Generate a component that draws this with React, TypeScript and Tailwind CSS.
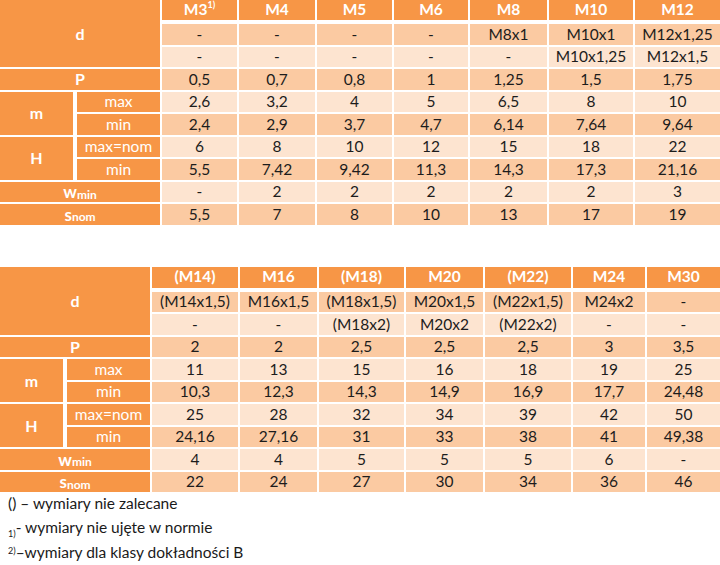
import React from 'react';

type Table = {
  cols: string;
  headerH: string;
  heads: React.ReactNode[];
  rows: string[][];
};

const band = ['bg-[#fbcaa2]', 'bg-[#fde4d0]'];

const first: Table = {
  cols: 'grid-cols-[73px_85px_75px_76px_75px_74px_77px_84px_1fr]',
  headerH: 'grid-rows-[20px_0px_repeat(9,20.5px)]',
  heads: [
    <>
      M3<sup className="text-[9px] -top-[5px]">1)</sup>
    </>,
    'M4',
    'M5',
    'M6',
    'M8',
    'M10',
    'M12',
  ],
  rows: [
    ['-', '-', '-', '-', 'M8x1', 'M10x1', 'M12x1,25'],
    ['-', '-', '-', '-', '-', 'M10x1,25', 'M12x1,5'],
    ['0,5', '0,7', '0,8', '1', '1,25', '1,5', '1,75'],
    ['2,6', '3,2', '4', '5', '6,5', '8', '10'],
    ['2,4', '2,9', '3,7', '4,7', '6,14', '7,64', '9,64'],
    ['6', '8', '10', '12', '15', '18', '22'],
    ['5,5', '7,42', '9,42', '11,3', '14,3', '17,3', '21,16'],
    ['-', '2', '2', '2', '2', '2', '3'],
    ['5,5', '7', '8', '10', '13', '17', '19'],
  ],
};

const second: Table = {
  cols: 'grid-cols-[63px_85px_86px_77px_85px_77px_86px_72px_1fr]',
  headerH: 'grid-rows-[21px_0px_repeat(9,20.5px)]',
  heads: ['(M14)', 'M16', '(M18)', 'M20', '(M22)', 'M24', 'M30'],
  rows: [
    ['(M14x1,5)', 'M16x1,5', '(M18x1,5)', 'M20x1,5', '(M22x1,5)', 'M24x2', '-'],
    ['-', '-', '(M18x2)', 'M20x2', '(M22x2)', '-', '-'],
    ['2', '2', '2,5', '2,5', '2,5', '3', '3,5'],
    ['11', '13', '15', '16', '18', '19', '25'],
    ['10,3', '12,3', '14,3', '14,9', '16,9', '17,7', '24,48'],
    ['25', '28', '32', '34', '39', '42', '50'],
    ['24,16', '27,16', '31', '33', '38', '41', '49,38'],
    ['4', '4', '5', '5', '5', '6', '-'],
    ['22', '24', '27', '30', '34', '36', '46'],
  ],
};

const orange = 'bg-[#f79646] text-white flex items-center justify-center';

const DimTable: React.FC<{ t: Table }> = ({ t }) => (
  <div className={`grid ${t.cols} ${t.headerH} gap-[2px] bg-white`}>
    {/* top-left d cell covers header + both thread rows */}
    <div className={`${orange} col-span-2 row-span-4 font-bold text-[16px]`}>d</div>
    {t.heads.map((h, i) => (
      <div key={i} className={`${orange} font-bold leading-none`}>
        {h}
      </div>
    ))}
    {/* spacer row, gives the thicker line under the header */}
    {t.heads.map((_, i) => (
      <div key={'s' + i} />
    ))}

    {t.rows.map((row, r) => {
      const labels: React.ReactNode[] = [];
      if (r === 2) labels.push(<div key="p" className={`${orange} col-span-2 font-bold text-[16px]`}>P</div>);
      if (r === 3) labels.push(<div key="m" className={`${orange} row-span-2 font-bold text-[16px]`}>m</div>);
      if (r === 5) labels.push(<div key="h" className={`${orange} row-span-2 font-bold text-[16px]`}>H</div>);
      if (r === 3 || r === 5) labels.push(<div key="mx" className={`${orange} ml-[2px]`}>{r === 3 ? 'max' : 'max=nom'}</div>);
      if (r === 4 || r === 6) labels.push(<div key="mn" className={`${orange} col-start-2 ml-[2px]`}>min</div>);
      if (r === 7)
        labels.push(
          <div key="w" className={`${orange} col-span-2 font-bold text-[17px]`}>
            w<span className="text-[12px] translate-y-[3px]">min</span>
          </div>
        );
      if (r === 8)
        labels.push(
          <div key="s" className={`${orange} col-span-2 font-bold text-[17px]`}>
            s<span className="text-[12px] translate-y-[3px]">nom</span>
          </div>
        );
      return (
        <React.Fragment key={r}>
          {labels}
          {row.map((v, c) => (
            <div
              key={c}
              className={`${band[r % 2]} flex items-center justify-center text-[#1c1c1c] ${c === 0 && r < 2 ? 'col-start-3' : ''}`}
            >
              {v}
            </div>
          ))}
        </React.Fragment>
      );
    })}
  </div>
);

export default function App() {
  return (
    <div className="w-[720px] h-[565px] bg-white overflow-hidden font-['Lato',sans-serif] text-[15.5px]">
      <DimTable t={first} />
      <div className="mt-[42px]">
        <DimTable t={second} />
      </div>
      <div className="pl-2 text-[#1a1a1a] leading-[23.5px]">
        <p>() – wymiary nie zalecane</p>
        <p>
          <span className="text-[9px] relative top-[4px]">1)</span>- wymiary nie ujęte w normie
        </p>
        <p>
          <sup className="text-[9px]">2)</sup>–wymiary dla klasy dokładności B
        </p>
      </div>
    </div>
  );
}
